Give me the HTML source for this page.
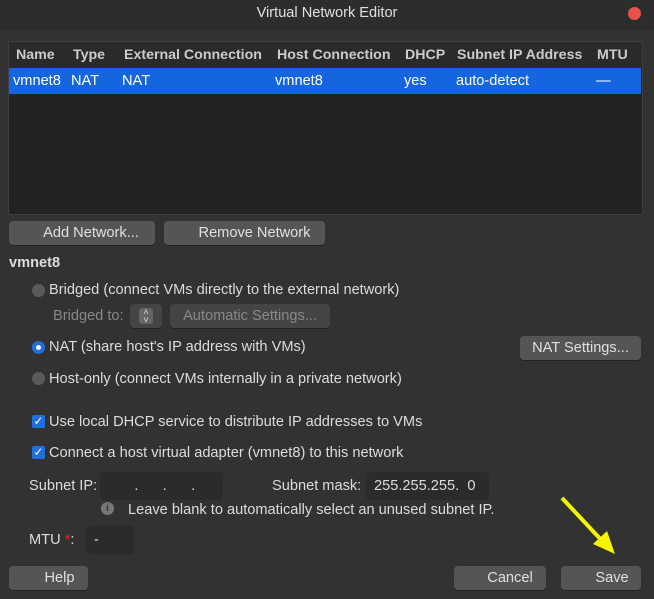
<!DOCTYPE html><html><head><style>
body{margin:0;width:654px;height:599px;background:#323232;font-family:"Liberation Sans",sans-serif;font-size:14.6px;color:#dcdcdc;position:relative;overflow:hidden}
.a{position:absolute;white-space:nowrap}
.btn{position:absolute;background:#555;border-radius:4px;color:#e0e0e0;text-align:center;box-shadow:0 1px 0 #222}
.dis{color:#888}
.field{position:absolute;background:#2b2b2b;border-radius:4px}
.rad{position:absolute;width:13px;height:13px;border-radius:50%;background:#5a5a5a}
.chk{position:absolute;width:13px;height:13px;border-radius:2px;background:#1f6fe0;color:#fff;font-size:12px;line-height:13px;text-align:center}
.h{top:47px;font-weight:bold;color:#ccc;font-size:14.2px}
.r{top:73px;color:#fff}
</style></head><body>
<div class="a" style="left:0;top:0;width:654px;height:30px;background:#2d2d2d"></div>
<div class="a" style="left:0;top:5px;width:654px;text-align:center;color:#e0e0e0">Virtual Network Editor</div>
<div class="a" style="left:628px;top:7px;width:13px;height:13px;border-radius:50%;background:#e5534b"></div>
<div class="a" style="left:8px;top:41px;width:633px;height:172px;background:#232323;border:1px solid #3e3e3e"></div>
<div class="a" style="left:9px;top:42px;width:633px;height:26px;background:#2a2a2a"></div>
<div class="a h" style="left:16px">Name</div>
<div class="a h" style="left:73px">Type</div>
<div class="a h" style="left:124px">External Connection</div>
<div class="a h" style="left:277px">Host Connection</div>
<div class="a h" style="left:405px">DHCP</div>
<div class="a h" style="left:457px">Subnet IP Address</div>
<div class="a h" style="left:597px">MTU</div>
<div class="a" style="left:9px;top:68px;width:632px;height:26px;background:#1565e0"></div>
<div class="a r" style="left:13px">vmnet8</div>
<div class="a r" style="left:71px">NAT</div>
<div class="a r" style="left:122px">NAT</div>
<div class="a r" style="left:275px">vmnet8</div>
<div class="a r" style="left:404px">yes</div>
<div class="a r" style="left:456px">auto-detect</div>
<div class="a r" style="left:596px">—</div>
<div class="btn" style="left:9px;top:221px;width:146px;height:24px;line-height:24px"><span style="padding-left:18px">Add Network...</span></div>
<div class="btn" style="left:164px;top:221px;width:161px;height:24px;line-height:24px"><span style="padding-left:20px">Remove Network</span></div>
<div class="a" style="left:9px;top:255px;font-weight:bold;color:#ddd">vmnet8</div>
<div class="rad" style="left:32px;top:284px"></div>
<div class="a" style="left:49px;top:282px">Bridged (connect VMs directly to the external network)</div>
<div class="a dis" style="left:53px;top:308px">Bridged to:</div>
<div class="btn" style="left:130px;top:304px;width:32px;height:24px;background:#444"><div style="margin:4px auto;width:14px;height:16px;background:#666;border-radius:3px;font-size:9px;line-height:8px;color:#ddd">˄<br>˅</div></div>
<div class="btn dis" style="left:170px;top:304px;width:160px;height:24px;line-height:24px;background:#444;color:#888">Automatic Settings...</div>
<div class="rad" style="left:32px;top:341px;background:#1f6fe0"><div style="margin:4px;width:5px;height:5px;border-radius:50%;background:#fff"></div></div>
<div class="a" style="left:49px;top:339px">NAT (share host's IP address with VMs)</div>
<div class="btn" style="left:520px;top:336px;width:121px;height:24px;line-height:24px">NAT Settings...</div>
<div class="rad" style="left:32px;top:372px"></div>
<div class="a" style="left:49px;top:371px">Host-only (connect VMs internally in a private network)</div>
<div class="chk" style="left:32px;top:415px">✓</div>
<div class="a" style="left:49px;top:414px">Use local DHCP service to distribute IP addresses to VMs</div>
<div class="chk" style="left:32px;top:446px">✓</div>
<div class="a" style="left:49px;top:445px">Connect a host virtual adapter (vmnet8) to this network</div>
<div class="a" style="left:29px;top:478px">Subnet IP:</div>
<div class="field" style="left:100px;top:472px;width:123px;height:28px"><span class="a" style="left:6px;top:6px">&nbsp;&nbsp;&nbsp;&nbsp;&nbsp;&nbsp;&nbsp;.&nbsp;&nbsp;&nbsp;&nbsp;&nbsp;&nbsp;.&nbsp;&nbsp;&nbsp;&nbsp;&nbsp;&nbsp;.</span></div>
<div class="a" style="left:272px;top:478px">Subnet mask:</div>
<div class="field" style="left:366px;top:472px;width:123px;height:28px"><span class="a" style="left:8px;top:6px">255.255.255.&nbsp;&nbsp;0</span></div>
<div class="a" style="left:101px;top:502px;width:13px;height:13px;border-radius:50%;background:#777;color:#333;font-size:10px;font-weight:bold;text-align:center;line-height:13px">i</div>
<div class="a" style="left:128px;top:502px">Leave blank to automatically select an unused subnet IP.</div>
<div class="a" style="left:29px;top:532px">MTU <span style="color:#d22">*</span>:</div>
<div class="field" style="left:86px;top:526px;width:48px;height:28px"><span class="a" style="left:8px;top:6px">-</span></div>
<div class="btn" style="left:9px;top:566px;width:79px;height:24px;line-height:24px"><span style="padding-left:22px">Help</span></div>
<div class="btn" style="left:454px;top:566px;width:92px;height:24px;line-height:24px"><span style="padding-left:20px">Cancel</span></div>
<div class="btn" style="left:561px;top:566px;width:80px;height:24px;line-height:24px"><span style="padding-left:22px">Save</span></div>
<svg class="a" style="left:555px;top:494px" width="70" height="64"><line x1="7" y1="4" x2="50" y2="50" stroke="#f5f500" stroke-width="4"/><polygon points="60,60 38,50 52,37" fill="#f5f500"/></svg>
</body></html>
